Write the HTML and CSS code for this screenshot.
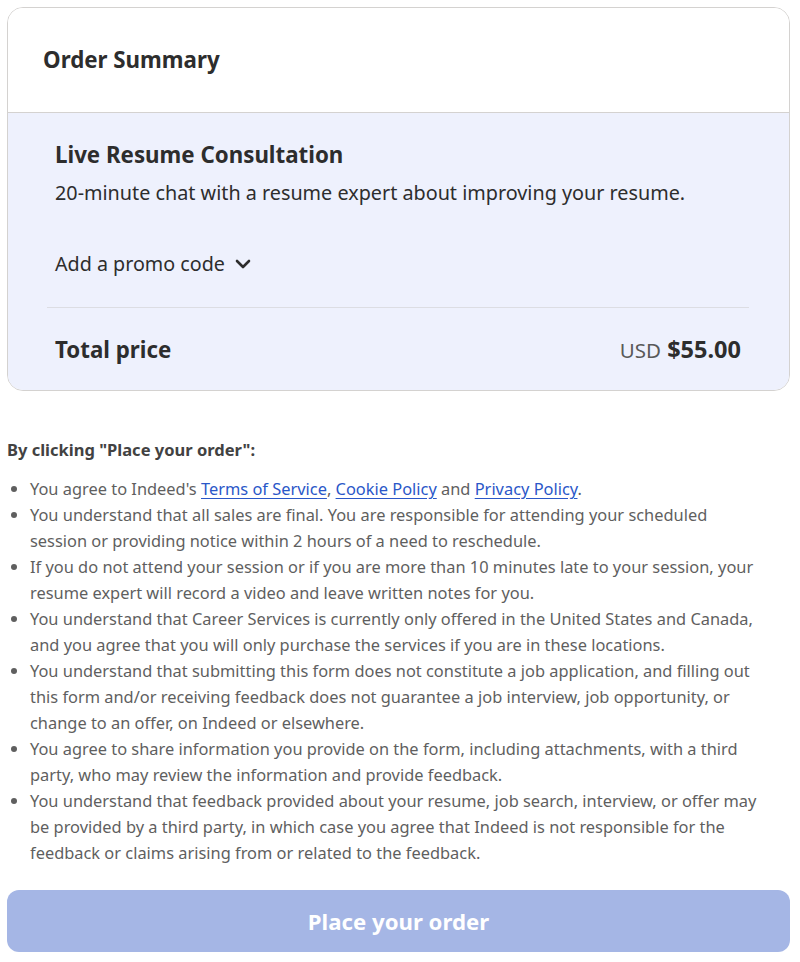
FILE: index.html
```html
<!DOCTYPE html>
<html lang="en">
<head>
<meta charset="utf-8">
<title>Order Summary</title>
<link rel="stylesheet" href="styles.css">
</head>
<body>
<main class="page">
  <section class="card">
    <header class="card-header">
      <h2 class="card-title">Order Summary</h2>
    </header>
    <div class="card-body">
      <div class="product">
        <h3 class="product-title">Live Resume Consultation</h3>
        <p class="product-desc">20-minute chat with a resume expert about improving your resume.</p>
        <button class="promo" type="button">Add a promo code
          <svg class="chev" width="16" height="16" viewBox="0 0 16 16" aria-hidden="true"><path d="M2 5 L8 11 L14 5" fill="none" stroke="#2d2d2d" stroke-width="2.6" stroke-linecap="round" stroke-linejoin="round"/></svg>
        </button>
      </div>
      <div class="total">
        <span class="total-label">Total price</span>
        <span class="total-price"><span class="currency">USD</span> <strong>$55.00</strong></span>
      </div>
    </div>
  </section>

  <section class="terms">
    <p class="terms-title">By clicking "Place your order":</p>
    <ul class="terms-list">
      <li>You agree to Indeed's <a href="#">Terms of Service</a>, <a href="#">Cookie Policy</a> and <a href="#">Privacy Policy</a>.</li>
      <li>You understand that all sales are final. You are responsible for attending your scheduled<br>session or providing notice within 2 hours of a need to reschedule.</li>
      <li>If you do not attend your session or if you are more than 10 minutes late to your session, your<br>resume expert will record a video and leave written notes for you.</li>
      <li>You understand that Career Services is currently only offered in the United States and Canada,<br>and you agree that you will only purchase the services if you are in these locations.</li>
      <li>You understand that submitting this form does not constitute a job application, and filling out<br>this form and/or receiving feedback does not guarantee a job interview, job opportunity, or<br>change to an offer, on Indeed or elsewhere.</li>
      <li>You agree to share information you provide on the form, including attachments, with a third<br>party, who may review the information and provide feedback.</li>
      <li>You understand that feedback provided about your resume, job search, interview, or offer may<br>be provided by a third party, in which case you agree that Indeed is not responsible for the<br>feedback or claims arising from or related to the feedback.</li>
    </ul>
  </section>

  <button class="order-btn" type="button">Place your order</button>
</main>
</body>
</html>
```
FILE: styles.css
```css
* { box-sizing: border-box; }
html, body { margin: 0; padding: 0; background: #ffffff; }
body {
  font-family: "Noto Sans", "Open Sans", sans-serif;
  color: #2d2d2d;
}
.page {
  width: 783px;
  margin-left: 7px;
  padding-top: 7px;
  display: flex;
  flex-direction: column;
}
.card {
  border: 1px solid #d4d2d0;
  border-radius: 16px;
  overflow: hidden;
}
.card-header {
  background: #ffffff;
  padding: 36px 35px;
  border-bottom: 1px solid #d4d2d0;
}
.card-title {
  margin: 0;
  font-size: 22.3px;
  line-height: 32px;
  font-weight: 700;
  color: #2d2d2d;
}
.card-body {
  background: #eef1fd;
  padding: 26px 40px 24px 39px;
}
.product {
  padding: 0 8px 29px;
  display: flex;
  flex-direction: column;
  align-items: flex-start;
  border-bottom: 1px solid #dcdde3;
}
.product-title {
  margin: 0;
  font-size: 22.3px;
  line-height: 32px;
  font-weight: 700;
}
.product-desc {
  margin: 8px 0 0;
  font-size: 19.8px;
  line-height: 28px;
  color: #2d2d2d;
}
.promo {
  margin-top: 43px;
  padding: 0;
  border: 0;
  background: none;
  font: inherit;
  font-size: 19.7px;
  line-height: 28px;
  color: #2d2d2d;
  display: flex;
  align-items: center;
  gap: 10px;
}
.chev { display: block; }
.total {
  display: flex;
  justify-content: space-between;
  align-items: center;
  padding: 25px 8px 0;
}
.total-label {
  font-size: 22.3px;
  line-height: 32px;
  font-weight: 700;
}
.total-price {
  font-size: 23.5px;
  line-height: 32px;
}
.currency {
  font-size: 20.5px;
  color: #595959;
}
.total-price strong { font-weight: 700; }
.terms { margin-top: 47px; }
.terms-title {
  margin: 0;
  font-size: 16.5px;
  line-height: 24px;
  font-weight: 700;
  color: #424242;
}
.terms-list {
  margin: 14px 0 0;
  padding-left: 23px;
  font-size: 16.4px;
  line-height: 26px;
  color: #5f5f5f;
}
.terms-list a {
  color: #2a57c8;
  text-decoration: underline;
  text-underline-offset: 3px;
}
.order-btn {
  margin-top: 24px;
  height: 62px;
  width: 100%;
  border: 0;
  border-radius: 12px;
  background: #a5b6e5;
  color: #ffffff;
  font-family: inherit;
  font-size: 22.2px;
  font-weight: 700;
}
```
